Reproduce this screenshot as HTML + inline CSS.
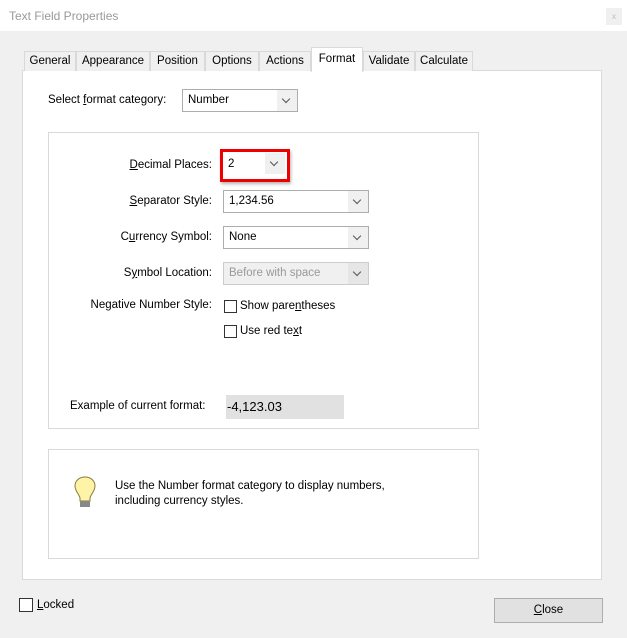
<!DOCTYPE html>
<html><head><style>
*{box-sizing:border-box;margin:0;padding:0}
body{width:627px;height:638px;background:#f0f0f0;font-family:"Liberation Sans",sans-serif;font-size:11.5px;color:#000;position:relative;overflow:hidden}
.a{position:absolute}
.title{left:0;top:0;width:627px;height:31px;background:#fff}
.tab{position:absolute;top:51px;height:20px;border:1px solid #d9d9d9;border-bottom:none;background:#f0f0f0;text-align:center;line-height:18px;font-size:11.5px}
.sel{border:1px solid #adadad;background:#fff;height:23px}
.sel span{position:absolute;left:5px;top:4px}
.sel i{position:absolute;right:0;top:0;width:20px;height:21px;background:#f0f0f0}
.sel i:after{content:"";position:absolute;left:6px;top:6px;width:5px;height:5px;border-right:1px solid #555;border-bottom:1px solid #555;transform:rotate(45deg)}
.lbl{text-align:right;width:200px;left:12px}
.cb{width:13px;height:13px;border:1px solid #333;background:#fff}
u{text-decoration:underline}
</style></head><body>
<div class="a title"></div>
<div class="a" style="left:9px;top:9px;color:#999;font-size:12px">Text Field Properties</div>
<div class="a" style="left:606px;top:8px;width:16px;height:17px;background:#f0f0f0;color:#bbb;font-size:8px;text-align:center;line-height:17px">x</div>
<div class="a" style="left:22px;top:70px;width:580px;height:510px;background:#fff;border:1px solid #d9d9d9"></div>
<div class="tab" style="left:24px;width:52px">General</div>
<div class="tab" style="left:76px;width:74px">Appearance</div>
<div class="tab" style="left:150px;width:55px">Position</div>
<div class="tab" style="left:205px;width:54px">Options</div>
<div class="tab" style="left:259px;width:52px">Actions</div>
<div class="tab" style="left:311px;width:52px;top:47px;height:25px;background:#fff;line-height:22px">Format</div>
<div class="tab" style="left:363px;width:52px">Validate</div>
<div class="tab" style="left:415px;width:58px">Calculate</div>
<div class="a" style="left:48px;top:94px">Select <u>f</u>ormat category:</div>
<div class="a sel" style="left:182px;top:89px;width:116px"><span>Number</span><i></i></div>
<div class="a" style="left:48px;top:132px;width:431px;height:297px;border:1px solid #d9d9d9"></div>
<div class="a" style="left:48px;top:449px;width:431px;height:110px;border:1px solid #d9d9d9"></div>
<div class="a lbl" style="top:159px"><u>D</u>ecimal Places:</div>
<div class="a" style="left:220px;top:149px;width:70px;height:33px;border:3px solid #e00;box-shadow:1px 2px 3px rgba(0,0,0,.3)"></div>
<div class="a sel" style="left:223px;top:153px;width:62px;border:none"><span style="left:5px;top:5px">2</span><i></i></div>
<div class="a lbl" style="top:195px"><u>S</u>eparator Style:</div>
<div class="a sel" style="left:223px;top:190px;width:146px"><span>1,234.56</span><i></i></div>
<div class="a lbl" style="top:231px">C<u>u</u>rrency Symbol:</div>
<div class="a sel" style="left:223px;top:226px;width:146px"><span>None</span><i></i></div>
<div class="a lbl" style="top:267px">S<u>y</u>mbol Location:</div>
<div class="a sel" style="left:223px;top:262px;width:146px;background:#f0f0f0;border-color:#ccc"><span style="color:#999">Before with space</span><i style="background:#e6e6e6"></i></div>
<div class="a lbl" style="top:299px">Negative Number Style:</div>
<div class="a cb" style="left:224px;top:300px"></div>
<div class="a" style="left:240px;top:300px">Show pare<u>n</u>theses</div>
<div class="a cb" style="left:224px;top:325px"></div>
<div class="a" style="left:240px;top:325px">Use red te<u>x</u>t</div>
<div class="a" style="left:70px;top:400px">Example of current format:</div>
<div class="a" style="left:226px;top:395px;width:118px;height:24px;background:#e1e1e1;font-size:13px;padding:4px 1px">-4,123.03</div>
<svg class="a" style="left:74px;top:476px" width="22" height="34" viewBox="0 0 22 34"><path d="M11 1C5 1 1 5 1 10c0 5 4 8 5 12v3h10v-3c1-4 5-7 5-12C21 5 17 1 11 1z" fill="#fff3a8" stroke="#8a7a3a"/><rect x="6" y="25" width="10" height="6" fill="#888"/></svg>
<div class="a" style="left:115px;top:479px;line-height:15px">Use the Number format category to display numbers,<br>including currency styles.</div>
<div class="a cb" style="left:19px;top:598px;width:14px;height:14px"></div>
<div class="a" style="left:37px;top:599px"><u>L</u>ocked</div>
<div class="a" style="left:494px;top:598px;width:109px;height:25px;background:#e1e1e1;border:1px solid #adadad;text-align:center;line-height:23px"><u>C</u>lose</div>
</body></html>
